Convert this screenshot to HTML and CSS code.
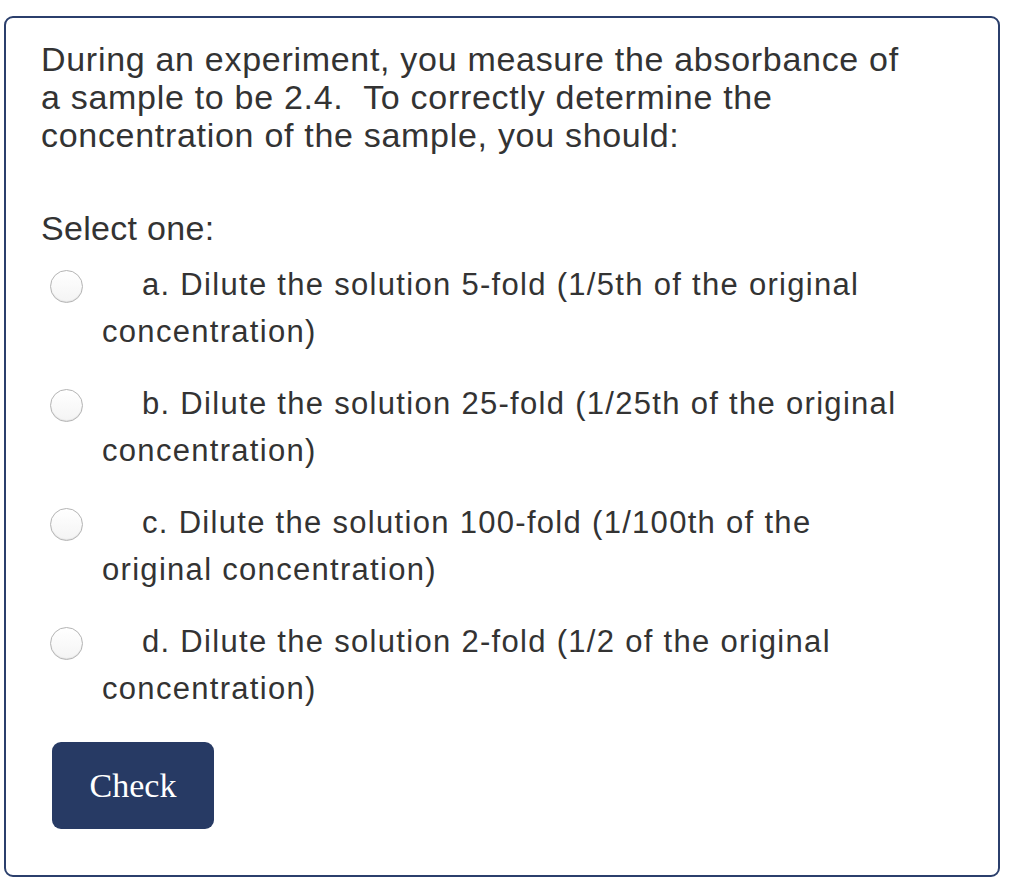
FILE: index.html
```html
<!DOCTYPE html>
<html>
<head>
<meta charset="utf-8">
<link rel="stylesheet" href="styles.css">
</head>
<body>
<div class="card">
  <div class="qtext">During an experiment, you measure the absorbance of<br>a sample to be 2.4.&nbsp; To correctly determine the<br>concentration of the sample, you should:</div>
  <div class="prompt">Select one:</div>
  <div class="answers">
    <div class="option"><span class="radio"></span>a. Dilute the solution 5-fold (1/5th of the original<br>concentration)</div>
    <div class="option"><span class="radio"></span>b. Dilute the solution 25-fold (1/25th of the original<br>concentration)</div>
    <div class="option"><span class="radio"></span>c. Dilute the solution 100-fold (1/100th of the<br>original concentration)</div>
    <div class="option"><span class="radio"></span>d. Dilute the solution 2-fold (1/2 of the original<br>concentration)</div>
  </div>
  <button class="check">Check</button>
</div>
</body>
</html>
```

FILE: styles.css
```css
html, body {
  margin: 0;
  padding: 0;
  background: #ffffff;
}
body {
  font-family: "Liberation Sans", Arial, Helvetica, sans-serif;
  color: #333333;
}
.card {
  box-sizing: border-box;
  margin: 16px 0 0 4px;
  width: 996px;
  height: 861px;
  border: 2px solid #2b3f6c;
  border-radius: 9px;
  padding: 22px 30px 0 35px;
}
.qtext {
  font-size: 34px;
  letter-spacing: 0.7px;
  line-height: 38px;
  white-space: nowrap;
}
.prompt {
  font-size: 34px;
  letter-spacing: 0.3px;
  line-height: 38px;
  margin-top: 55px;
}
.answers {
  margin-top: 14px;
}
.option {
  font-size: 31px;
  letter-spacing: 1.3px;
  line-height: 47px;
  padding-left: 61px;
  margin-bottom: 25px;
  white-space: nowrap;
}
.radio {
  display: inline-block;
  box-sizing: border-box;
  width: 33px;
  height: 33px;
  margin-left: -52px;
  margin-right: 59px;
  vertical-align: -8px;
  border-radius: 50%;
  border: 1px solid #b4b4b4;
  background: linear-gradient(#ffffff, #f4f4f4);
  box-shadow: inset 0 -1px 1px rgba(0,0,0,0.08);
}
.check {
  display: block;
  margin-top: 30px;
  margin-left: 11px;
  width: 162px;
  height: 87px;
  border: none;
  border-radius: 9px;
  background: #273a64;
  color: #ffffff;
  font-family: "Liberation Serif", "Times New Roman", serif;
  font-size: 34px;
  padding: 0;
}
```
